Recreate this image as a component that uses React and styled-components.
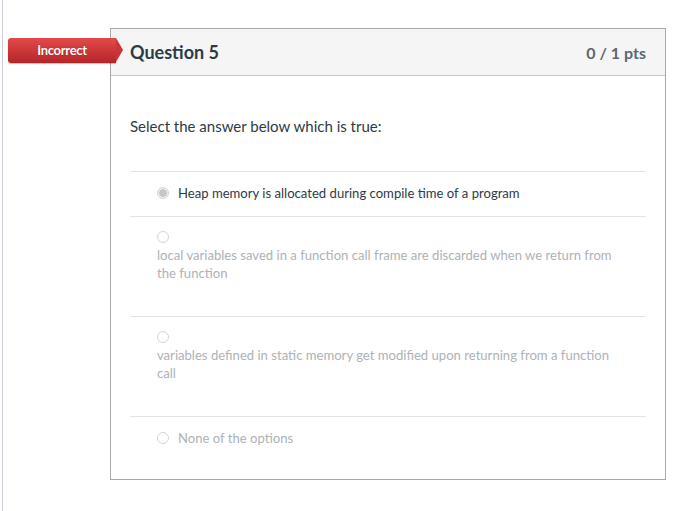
import styled, { createGlobalStyle } from "styled-components";

const GlobalStyle = createGlobalStyle`
  html, body {
    margin: 0;
    padding: 0;
    background: #fff;
    font-family: Lato, "Liberation Sans", sans-serif;
  }
`;

const answers = [
  { text: "Heap memory is allocated during compile time of a program", selected: true, wrapped: false },
  {
    text: "local variables saved in a function call frame are discarded when we return from the function",
    wrapped: true,
  },
  {
    text: "variables defined in static memory get modified upon returning from a function call",
    wrapped: true,
  },
  { text: "None of the options", wrapped: false },
];

function App() {
  return (
    <Page>
      <GlobalStyle />
      <Card>
        <Badge>Incorrect</Badge>
        <Header>
          <Title>Question 5</Title>
          <Points>0 / 1 pts</Points>
        </Header>
        <Body>
          <Prompt>Select the answer below which is true:</Prompt>
          <AnswerList>
            {answers.map((a, i) => (
              <Answer key={i} $wrapped={a.wrapped}>
                <Radio $checked={a.selected} $block={a.wrapped} />
                <AnswerText $selected={a.selected}>{a.text}</AnswerText>
              </Answer>
            ))}
          </AnswerList>
        </Body>
      </Card>
    </Page>
  );
}

export default App;

const Page = styled.div`
  margin-left: 2px;
  border-left: 1px solid #c9cfd4;
  min-height: 100vh;
  padding: 28px 0 0 107px;
  box-sizing: border-box;
`;

const Card = styled.div`
  position: relative;
  width: 556px;
  height: 452px;
  box-sizing: border-box;
  border: 1px solid #a8a8a8;
  background: #fff;
`;

const Badge = styled.div`
  position: absolute;
  left: -103px;
  top: 9px;
  width: 108px;
  height: 25px;
  box-sizing: border-box;
  padding-bottom: 2px;
  display: flex;
  align-items: center;
  justify-content: center;
  color: #fff;
  font-size: 13px;
  font-weight: 700;
  letter-spacing: -0.3px;
  background: linear-gradient(#e4494a, #b42527);
  border-radius: 3px 0 0 3px;
  box-shadow: 0 1px 1px rgba(0, 0, 0, 0.25);
  text-shadow: 0 0 1px rgba(120, 0, 0, 0.6);
  z-index: 2;

  &::after {
    content: "";
    position: absolute;
    right: -7px;
    top: 0;
    border-top: 12.5px solid transparent;
    border-bottom: 12.5px solid transparent;
    border-left: 7px solid #cb3537;
  }
`;

const Header = styled.div`
  height: 46px;
  display: flex;
  align-items: center;
  justify-content: space-between;
  padding: 0 19px;
  background: #f5f5f5;
  border-bottom: 1px solid #c7c7c7;
`;

const Title = styled.h2`
  margin: 0;
  font-size: 18px;
  font-weight: 700;
  color: #2d3b45;
`;

const Points = styled.div`
  font-size: 16px;
  font-weight: 700;
  color: #5b6770;
`;

const Body = styled.div`
  padding: 0 19px;
`;

const Prompt = styled.p`
  margin: 40px 0 35px;
  font-size: 15px;
  line-height: 20px;
  color: #2d3b45;
`;

const AnswerList = styled.div`
  border-top: 1px solid #e4e4e4;
`;

const Answer = styled.div`
  display: ${(p) => (p.$wrapped ? "block" : "flex")};
  align-items: center;
  padding: ${(p) => (p.$wrapped ? "11px 30px 33px 27px" : "12px 30px 13px 27px")};
  border-bottom: 1px solid #e4e4e4;

  &:last-child {
    border-bottom: none;
  }
`;

const Radio = styled.span`
  display: ${(p) => (p.$block ? "block" : "inline-block")};
  flex: none;
  width: 10px;
  height: 10px;
  margin: ${(p) => (p.$block ? "3px 0 3px 0" : "0 9px 0 0")};
  border-radius: 50%;
  border: 1px solid #d6d6d6;
  background: ${(p) =>
    p.$checked ? "radial-gradient(circle, #c6c6c6 0 3.5px, #ededed 4px)" : "#fff"};
`;

const AnswerText = styled.span`
  display: block;
  font-size: 13.1px;
  line-height: 18.5px;
  color: ${(p) => (p.$selected ? "#2d3b45" : "#adb2b5")};
`;
